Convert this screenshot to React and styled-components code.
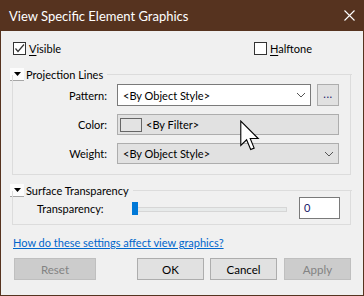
import React from 'react';
import styled, {createGlobalStyle} from 'styled-components';

const GlobalStyle = createGlobalStyle`
  html, body {
    margin: 0;
    padding: 0;
    background: #f0f0f0;
  }
  body {
    font-family: Lato, "Liberation Sans", sans-serif;
    font-size: 11px;
    color: #000;
  }
`

const Frame = styled.div`
  position: relative;
  width: 364px;
  height: 296px;
  box-sizing: border-box;
  border: 1px solid #56331f;
  border-top: none;
  background: #f0f0f0;
  display: flex;
  flex-direction: column;
  overflow: hidden;
`

const TitleBar = styled.div`
  height: 31px;
  margin: 0 -1px;
  background: #56331f;
  color: #fff;
  display: flex;
  align-items: center;
  justify-content: space-between;
  padding: 0 9px 0 9px;
  font-size: 13px;
  flex-shrink: 0;
`

const Content = styled.div`
  padding: 10px 12px 0 11px;
  display: flex;
  flex-direction: column;
`

const CheckRow = styled.div`
  display: flex;
  align-items: center;
  height: 15px;
  padding-left: 1px;
`

const Check = styled.label`
  display: flex;
  align-items: center;
  gap: 3px;
  width: ${p => p.$width || 'auto'};
`

const Box = styled.span`
  width: 13px;
  height: 13px;
  box-sizing: border-box;
  border: 1px solid #333;
  background: #fff;
  display: flex;
  align-items: center;
  justify-content: center;
`

const Key = styled.span`
  text-decoration: underline;
  text-underline-offset: 2px;
`

const GroupHead = styled.div`
  display: flex;
  align-items: center;
  height: 14px;
  margin-left: -2px;
  margin-top: ${p => p.$top}px;
`

const Toggle = styled.span`
  width: 14px;
  height: 13px;
  box-sizing: border-box;
  background: #fcfcfc;
  border-bottom: 1px solid #a6a6a6;
  display: flex;
  align-items: center;
  justify-content: center;
  flex-shrink: 0;
`

const GroupTitle = styled.span`
  padding: 0 4px 0 2px;
  white-space: nowrap;
`

const Rule = styled.span`
  flex: 1;
  height: 1px;
  background: #dcdcdc;
  margin-right: -1px;
`

const GroupBody = styled.div`
  border: 1px solid #dcdcdc;
  border-top: none;
  margin-top: -6px;
  padding: ${p => p.$pad};
  display: grid;
  grid-template-columns: ${p => p.$cols || '94px 1fr'};
  column-gap: 10px;
  row-gap: ${p => p.$gap || 0}px;
  align-items: center;
`

const Label = styled.span`
  text-align: right;
`

const FieldLine = styled.div`
  display: flex;
  gap: 6px;
  height: ${p => p.$h}px;
`

const Select = styled.div`
  flex: 1;
  box-sizing: border-box;
  border: 1px solid ${p => p.$muted ? '#adadad' : '#7a7a7a'};
  background: ${p => p.$muted ? '#e1e1e1' : '#fff'};
  display: flex;
  align-items: center;
  justify-content: space-between;
  padding: 0 4px 0 5px;
  gap: 4px;
`

const SelectText = styled.span`
  flex: 1;
`

const Swatch = styled.span`
  width: 22px;
  height: 14px;
  box-sizing: border-box;
  border: 1px solid #666;
  background: #e3e3e3;
  margin-left: -3px;
`

const SmallButton = styled.div`
  width: 22px;
  box-sizing: border-box;
  border: 1px solid #adadad;
  background: #e1e1e1;
  color: #1a1a6a;
  display: flex;
  justify-content: center;
  align-items: center;
  letter-spacing: 0.5px;
  padding-bottom: 3px;
`

const SliderLine = styled.div`
  display: flex;
  align-items: center;
  justify-content: space-between;
`

const SliderGroup = styled.div`
  display: flex;
  align-items: center;
`

const SliderLabel = styled.span`
  width: 124px;
  box-sizing: border-box;
  padding-left: 24px;
`

const Track = styled.div`
  position: relative;
  width: 148px;
  height: 3px;
  background: #e7eaea;
  border: 1px solid #d6d6d6;
  margin-top: 2px;
`

const Thumb = styled.span`
  position: absolute;
  left: -6px;
  top: -6px;
  width: 6px;
  height: 13px;
  background: #0078d7;
`

const NumberBox = styled.div`
  width: 41px;
  height: 22px;
  box-sizing: border-box;
  border: 1px solid #7a7a7a;
  background: #fff;
  padding: 3px 0 0 4px;
  color: #1a1a6a;
`

const HelpLink = styled.a`
  color: #0066cc;
  text-decoration: underline;
  margin-top: 10px;
  margin-left: 1px;
  line-height: 16px;
  cursor: pointer;
`

const ButtonRow = styled.div`
  display: flex;
  margin-top: 7px;
  padding-left: 2px;
`

const Button = styled.div`
  width: ${p => p.$w}px;
  height: 22px;
  box-sizing: border-box;
  margin-left: ${p => p.$gap || 0}px;
  border: 1px solid ${p => p.$off ? '#bfbfbf' : '#adadad'};
  background: ${p => p.$off ? '#cccccc' : '#e1e1e1'};
  color: ${p => p.$off ? '#838383' : '#000'};
  display: flex;
  align-items: center;
  justify-content: center;
  font-size: 11.5px;
`

const Pointer = styled.svg`
  position: absolute;
  left: 239px;
  top: 120px;
`

const Chevron = () => (
  <svg width="10" height="6" viewBox="0 0 10 6">
    <path d="M1 1 L5 5 L9 1" fill="none" stroke="#555" strokeWidth="1"/>
  </svg>
)

const Caret = () => (
  <svg width="7" height="4" viewBox="0 0 7 4">
    <path d="M0 0 H7 L3.5 4 Z" fill="#000"/>
  </svg>
)

const App = () => {
  return (
    <Frame>
      <GlobalStyle/>
      <TitleBar>
        <span>View Specific Element Graphics</span>
        <svg width="11" height="11" viewBox="0 0 11 11">
          <path d="M0.5 0.5 L10.5 10.5 M10.5 0.5 L0.5 10.5" stroke="#fff" strokeWidth="1.1"/>
        </svg>
      </TitleBar>
      <Content>
        <CheckRow>
          <Check $width="241px">
            <Box>
              <svg width="11" height="11" viewBox="0 0 11 11">
                <path d="M1.5 5.5 L4 8.5 L10 1.5" fill="none" stroke="#333" strokeWidth="1.2"/>
              </svg>
            </Box>
            <span><Key>V</Key>isible</span>
          </Check>
          <Check>
            <Box/>
            <span><Key>H</Key>alftone</span>
          </Check>
        </CheckRow>

        <GroupHead $top={11}>
          <Toggle><Caret/></Toggle>
          <GroupTitle>Projection Lines</GroupTitle>
          <Rule/>
        </GroupHead>
        <GroupBody $pad="9px 11px 10px 0" $gap={8}>
          <Label>Pattern:</Label>
          <FieldLine $h={22}>
            <Select>
              <SelectText>&lt;By Object Style&gt;</SelectText>
              <Chevron/>
            </Select>
            <SmallButton>...</SmallButton>
          </FieldLine>
          <Label>Color:</Label>
          <FieldLine $h={21}>
            <Select $muted>
              <Swatch/>
              <SelectText>&lt;By Filter&gt;</SelectText>
            </Select>
          </FieldLine>
          <Label>Weight:</Label>
          <FieldLine $h={21}>
            <Select $muted>
              <SelectText>&lt;By Object Style&gt;</SelectText>
              <Chevron/>
            </Select>
          </FieldLine>
        </GroupBody>

        <GroupHead $top={8}>
          <Toggle><Caret/></Toggle>
          <GroupTitle>Surface Transparency</GroupTitle>
          <Rule/>
        </GroupHead>
        <GroupBody $pad="6px 10px 5px 0" $cols="1fr">
          <SliderLine>
            <SliderGroup>
              <SliderLabel>Transparency:</SliderLabel>
              <Track><Thumb/></Track>
            </SliderGroup>
            <NumberBox>0</NumberBox>
          </SliderLine>
        </GroupBody>

        <HelpLink>How do these settings affect view graphics?</HelpLink>

        <ButtonRow>
          <Button $w={82} $off>Reset</Button>
          <Button $w={67} $gap={41}>OK</Button>
          <Button $w={67} $gap={6}>Cancel</Button>
          <Button $w={67} $gap={7} $off>Apply</Button>
        </ButtonRow>
      </Content>

      <Pointer width="22" height="32" viewBox="0 0 14 20">
        <path d="M0.5 0.5 V16 L4.2 12.4 L6.8 18.6 L9 17.7 L6.5 11.6 H11.6 Z" fill="#fff" stroke="#000" strokeWidth="0.7" strokeLinejoin="miter"/>
      </Pointer>
    </Frame>
  );
};

export default App;
